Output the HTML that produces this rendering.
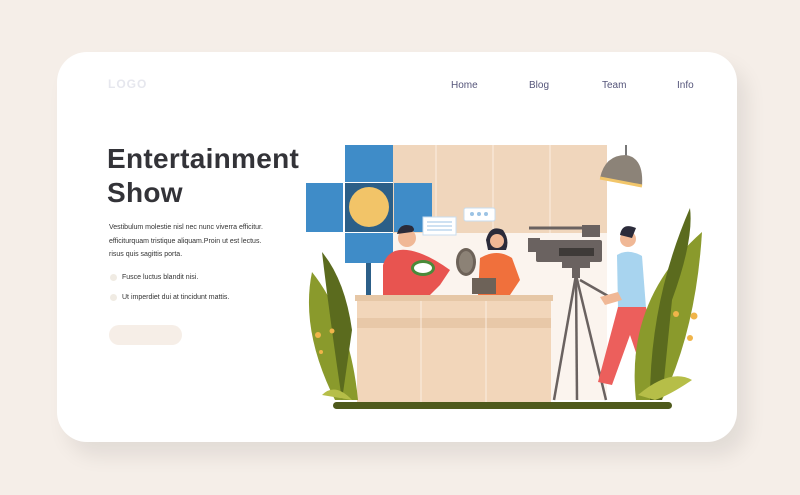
<!DOCTYPE html>
<html><head><style>
*{margin:0;padding:0;box-sizing:border-box}
body{width:800px;height:495px;background:#f5eee8;position:relative;overflow:hidden;font-family:"Liberation Sans",sans-serif}
.card{position:absolute;left:57px;top:52px;width:680px;height:390px;background:#fff;border-radius:30px;box-shadow:10px 14px 20px rgba(0,0,0,0.08)}
.a{position:absolute}
.nav{position:absolute;top:80px;font-size:10px;color:#55557a}
</style></head><body>
<div class="card"></div>
<div class="a" style="left:108px;top:77px;font-size:12px;font-weight:bold;color:#e6e7ee;letter-spacing:1px">LOGO</div>
<div class="nav" style="left:451px">Home</div>
<div class="nav" style="left:529px">Blog</div>
<div class="nav" style="left:602px">Team</div>
<div class="nav" style="left:677px">Info</div>
<div class="a" style="left:107px;top:142px;font-size:28px;font-weight:bold;color:#333338;line-height:34px;letter-spacing:0.3px">Entertainment<br>Show</div>
<div class="a" style="left:109px;top:221px;font-size:7px;color:#333;line-height:13.5px">Vestibulum molestie nisl nec nunc viverra efficitur.<br>efficiturquam tristique aliquam.Proin ut est lectus.<br>risus quis sagittis porta.</div>
<div class="a" style="left:110px;top:274px;width:7px;height:7px;border-radius:50%;background:#f0ebe3"></div>
<div class="a" style="left:122px;top:274px;font-size:7px;color:#333">Fusce luctus blandit nisi.</div>
<div class="a" style="left:110px;top:294px;width:7px;height:7px;border-radius:50%;background:#f0ebe3"></div>
<div class="a" style="left:122px;top:294px;font-size:7px;color:#333">Ut imperdiet dui at tincidunt mattis.</div>
<div class="a" style="left:109px;top:325px;width:73px;height:20px;border-radius:10px;background:#f6eee7"></div>
<svg class="a" style="left:0;top:0" width="800" height="495">
<rect x="393" y="145" width="214" height="255" fill="#fbf4ee"/>
<rect x="393" y="145" width="214" height="88" fill="#f0d6bc"/>
<g stroke="#fbeee2" stroke-width="1"><line x1="436" y1="145" x2="436" y2="233"/><line x1="493" y1="145" x2="493" y2="233"/><line x1="550" y1="145" x2="550" y2="233"/></g>
<line x1="626" y1="145" x2="626" y2="158" stroke="#777" stroke-width="2"/>
<path d="M600 178 Q605 155 626 155 Q644 158 642 186 Z" fill="#8c8378"/>
<path d="M600 178 L642 186" stroke="#f2c66a" stroke-width="3"/>
<rect x="345" y="145" width="48" height="37" fill="#3f8cc8"/>
<rect x="306" y="183" width="37" height="49" fill="#3f8cc8"/>
<rect x="394" y="183" width="38" height="49" fill="#3f8cc8"/>
<rect x="345" y="233" width="48" height="30" fill="#3f8cc8"/>
<rect x="345" y="183" width="48" height="49" fill="#2c5f88"/>
<circle cx="369" cy="207" r="20" fill="#f2c468"/>
<rect x="366" y="263" width="5" height="32" fill="#2c5f88"/>
<rect x="423" y="217" width="33" height="18" fill="#fff" stroke="#c8ddef"/>
<g stroke="#9cc3e4"><line x1="427" y1="222" x2="452" y2="222"/><line x1="427" y1="226" x2="452" y2="226"/><line x1="427" y1="230" x2="452" y2="230"/></g>
<rect x="464" y="208" width="31" height="13" rx="2" fill="#fff" stroke="#c8ddef"/>
<g fill="#9cc3e4"><circle cx="472" cy="214" r="2"/><circle cx="479" cy="214" r="2"/><circle cx="486" cy="214" r="2"/></g>
<circle cx="407" cy="238" r="9" fill="#f0b896"/>
<path d="M397 234 Q400 222 412 226 Q416 230 412 232 Z" fill="#2b2b3a"/>
<path d="M383 295 L383 265 Q388 248 407 250 Q425 252 450 270 L440 285 L430 295 Z" fill="#e85450"/>
<ellipse cx="423" cy="268" rx="12" ry="8" fill="#4a8a3a"/>
<ellipse cx="423" cy="268" rx="9" ry="5" fill="#fff"/>
<circle cx="497" cy="240" r="8" fill="#f0b896"/>
<path d="M486 240 Q490 224 503 230 Q510 240 506 250 L488 250Z" fill="#2b2b3a"/>
<circle cx="497" cy="241" r="7" fill="#f0b896"/>
<path d="M478 295 L480 258 Q497 248 512 258 L520 280 L510 295Z" fill="#f0703c"/>
<ellipse cx="466" cy="262" rx="10" ry="14" fill="#6d6258"/>
<ellipse cx="466" cy="262" rx="7" ry="11" fill="#8c8276"/>
<rect x="472" y="278" width="24" height="16" fill="#6d6258"/>
<rect x="355" y="295" width="198" height="6" fill="#e6c7a6"/>
<rect x="357" y="301" width="194" height="101" fill="#f2d6ba"/>
<rect x="357" y="318" width="194" height="10" fill="#e8c8a8"/>
<g stroke="#fbeee2"><line x1="421" y1="301" x2="421" y2="402"/><line x1="486" y1="301" x2="486" y2="402"/></g>
<rect x="536" y="240" width="66" height="22" rx="2" fill="#6a6260"/>
<rect x="528" y="238" width="12" height="14" fill="#6a6260"/>
<rect x="559" y="248" width="35" height="8" fill="#3e3a38"/>
<rect x="582" y="225" width="18" height="12" fill="#6a6260"/>
<line x1="529" y1="228" x2="595" y2="228" stroke="#6a6260" stroke-width="3"/>
<rect x="562" y="262" width="28" height="6" fill="#6a6260"/>
<rect x="572" y="268" width="8" height="10" fill="#6a6260"/>
<g stroke="#6a6260" stroke-width="2.5"><line x1="576" y1="275" x2="554" y2="400"/><line x1="576" y1="275" x2="577" y2="400"/><line x1="576" y1="275" x2="606" y2="400"/><line x1="580" y1="280" x2="608" y2="296"/></g>
<circle cx="628" cy="239" r="8" fill="#f0b896"/>
<path d="M620 235 Q622 222 636 228 L632 238Z" fill="#2b2b3a"/>
<path d="M617 255 Q628 248 642 256 L646 308 L618 308Z" fill="#a8d4ef"/>
<path d="M600 297 L618 292 L622 300 L605 305Z" fill="#f0b896"/>
<path d="M618 307 L646 307 L660 385 L648 388 L630 335 L612 385 L598 382 Z" fill="#ec5f5c"/>
<path d="M335 400 Q300 330 312 272 Q350 320 358 400Z" fill="#8a9a2c"/>
<path d="M342 400 Q330 320 322 252 Q345 280 352 330Z" fill="#5b6b1e"/>
<path d="M322 395 Q335 382 352 400Z" fill="#b6be48"/>
<g fill="#f0b44a"><circle cx="318" cy="335" r="3"/><circle cx="332" cy="331" r="2.5"/><circle cx="321" cy="352" r="2"/></g>
<path d="M636 400 Q625 300 702 232 Q696 330 662 400Z" fill="#8a9a2c"/>
<path d="M650 400 Q650 300 690 208 Q694 240 672 300 L662 400Z" fill="#5b6b1e"/>
<path d="M638 395 Q670 368 692 380 Q670 395 655 400Z" fill="#b6be48"/>
<g fill="#f0b44a"><circle cx="676" cy="314" r="3"/><circle cx="694" cy="316" r="3.5"/><circle cx="690" cy="338" r="3"/></g>
<rect x="333" y="402" width="339" height="7" rx="3.5" fill="#4f5a1c"/>
</svg>
</body></html>
